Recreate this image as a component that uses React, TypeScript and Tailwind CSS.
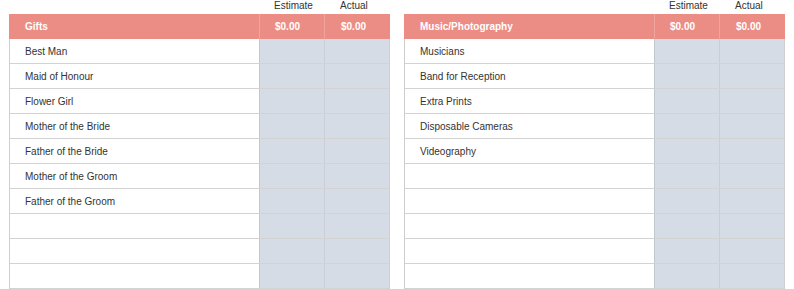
const gifts = [
  "Best Man",
  "Maid of Honour",
  "Flower Girl",
  "Mother of the Bride",
  "Father of the Bride",
  "Mother of the Groom",
  "Father of the Groom",
  "",
  "",
  "",
];

const music = [
  "Musicians",
  "Band for Reception",
  "Extra Prints",
  "Disposable Cameras",
  "Videography",
  "",
  "",
  "",
  "",
  "",
];

function BudgetTable({ title, rows }: { title: string; rows: string[] }) {
  return (
    <div className="w-[381px] flex flex-col">
      <div className="flex h-[14px] text-[10px] leading-[11px] text-[#333]">
        <div className="w-[250px]" />
        <div className="w-[65px] pl-[15px]">Estimate</div>
        <div className="w-[66px] pl-[16px]">Actual</div>
      </div>

      <div className="flex h-[25px] bg-[#ec8d85] text-white font-bold text-[10px] items-center">
        <div className="w-[250px] pl-[16px]">{title}</div>
        <div className="w-[65px] h-full flex items-center pl-[15px] border-l border-[#f0a49d]">
          $0.00
        </div>
        <div className="w-[66px] h-full flex items-center pl-[16px] border-l border-[#f0a49d]">
          $0.00
        </div>
      </div>

      <div className="border-l border-r border-[#cfcfcf]">
        {rows.map((label, i) => (
          <div key={i} className="flex h-[25px] border-b border-[#d3d3d3] text-[10px] text-[#333]">
            <div className="w-[249px] flex items-center pl-[15px] bg-white">{label}</div>
            <div className="w-[65px] bg-[#d6dce5] border-l border-[#c3c8d0]" />
            <div className="w-[65px] bg-[#d6dce5] border-l border-[#c9ced6]" />
          </div>
        ))}
      </div>
    </div>
  );
}

export default function App() {
  return (
    <div
      className="w-[794px] h-[289px] bg-white overflow-hidden flex gap-[14px] pl-[9px]"
      style={{ fontFamily: '"Liberation Sans", Arial, sans-serif' }}
    >
      <BudgetTable title="Gifts" rows={gifts} />
      <BudgetTable title="Music/Photography" rows={music} />
    </div>
  );
}
